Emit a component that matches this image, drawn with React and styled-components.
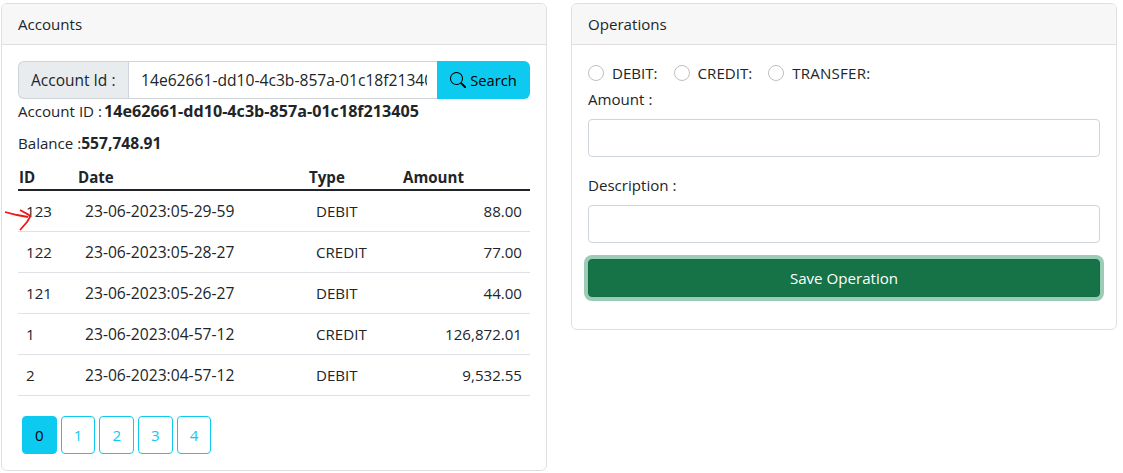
import { BsSearch } from 'react-icons/bs'
import styled, { createGlobalStyle } from 'styled-components'

const rows = [
  { id: 123, date: '23-06-2023:05-29-59', type: 'DEBIT', amount: '88.00' },
  { id: 122, date: '23-06-2023:05-28-27', type: 'CREDIT', amount: '77.00' },
  { id: 121, date: '23-06-2023:05-26-27', type: 'DEBIT', amount: '44.00' },
  { id: 1, date: '23-06-2023:04-57-12', type: 'CREDIT', amount: '126,872.01' },
  { id: 2, date: '23-06-2023:04-57-12', type: 'DEBIT', amount: '9,532.55' }
]

export default function App () {
  return (
    <>
      <GlobalStyle />
      <Page>
        <Card>
          <CardHeader>Accounts</CardHeader>
          <CardBody>
            <InputGroup>
              <Addon>Account Id :</Addon>
              <GroupInput type="text" readOnly value="14e62661-dd10-4c3b-857a-01c18f213405" />
              <SearchBtn type="button">
                <BsSearch size={16} />
                Search
              </SearchBtn>
            </InputGroup>
            <InfoLine>Account ID :<InfoValue $size="16.15px" $gap="2px">14e62661-dd10-4c3b-857a-01c18f213405</InfoValue></InfoLine>
            <InfoLine>Balance :<InfoValue $size="15.6px">557,748.91</InfoValue></InfoLine>
            <TableWrap>
              <Table>
                <colgroup>
                  <col width="59" />
                  <col width="231" />
                  <col width="94" />
                  <col width="128" />
                </colgroup>
                <thead>
                  <tr>
                    <th>ID</th>
                    <th>Date</th>
                    <th>Type</th>
                    <th>Amount</th>
                  </tr>
                </thead>
                <tbody>
                  {rows.map(row => (
                    <tr key={row.id}>
                      <td>{row.id}</td>
                      <DateCell>{row.date}</DateCell>
                      <td>{row.type}</td>
                      <AmountCell>{row.amount}</AmountCell>
                    </tr>
                  ))}
                </tbody>
              </Table>
              <Scribble viewBox="0 0 40 40" width="40" height="40">
                <path d="M5 21 L17 24 L28 26" />
                <path d="M20 19 L29 24 L30 26 L27 31 L20 39" />
              </Scribble>
            </TableWrap>
            <Pagination>
              {[0, 1, 2, 3, 4].map(page => (
                <PageBtn key={page} type="button" $active={page === 0}>{page}</PageBtn>
              ))}
            </Pagination>
          </CardBody>
        </Card>
        <Card>
          <CardHeader>Operations</CardHeader>
          <CardBody>
            <RadioRow>
              <RadioLabel><Radio type="radio" name="op" />DEBIT:</RadioLabel>
              <RadioLabel><Radio type="radio" name="op" />CREDIT:</RadioLabel>
              <RadioLabel $spacing="0.2px"><Radio type="radio" name="op" />TRANSFER:</RadioLabel>
            </RadioRow>
            <Field>
              <FieldLabel>Amount :</FieldLabel>
              <FieldInput type="text" />
            </Field>
            <Field>
              <FieldLabel>Description :</FieldLabel>
              <FieldInput type="text" />
            </Field>
            <SaveBtn type="button">Save Operation</SaveBtn>
          </CardBody>
        </Card>
      </Page>
    </>
  )
}

const GlobalStyle = createGlobalStyle`
  * {
    box-sizing: border-box;
  }
  body {
    margin: 0;
    background: #ffffff;
    color: #212529;
    font-family: "Open Sans", "Noto Sans", sans-serif;
    font-size: 15.1px;
    line-height: 24px;
  }
`
const Page = styled.div`
  display: grid;
  grid-template-columns: 546px 546px;
  grid-gap: 24px;
  align-items: start;
  padding: 3px 0 0 1px;
`
const Card = styled.section`
  border: 1px solid #dfdfdf;
  border-radius: 6px;
  background: #ffffff;
  overflow: hidden;
`
const CardHeader = styled.header`
  height: 41px;
  padding: 8px 16px;
  background: #f7f7f7;
  border-bottom: 1px solid #dfdfdf;
`
const CardBody = styled.div`
  padding: 16px;
`
const InputGroup = styled.div`
  display: flex;
  height: 38px;
`
const Addon = styled.span`
  display: flex;
  align-items: center;
  width: 110px;
  padding: 0 12px;
  background: #e9ecef;
  border: 1px solid #ced4da;
  border-right: none;
  border-radius: 6px 0 0 6px;
  font-size: 15.5px;
  white-space: nowrap;
`
const GroupInput = styled.input`
  flex: 1;
  min-width: 0;
  padding: 0 10px 0 12px;
  border: 1px solid #ced4da;
  border-right: none;
  outline: none;
  color: #212529;
  font: inherit;
  font-size: 15.65px;
`
const SearchBtn = styled.button`
  display: flex;
  align-items: center;
  justify-content: center;
  gap: 4px;
  width: 93px;
  padding: 0;
  background: #0dcaf0;
  border: none;
  border-radius: 0 6px 6px 0;
  color: #000000;
  font: inherit;
  font-size: 14.7px;
`
const InfoLine = styled.p`
  margin: 0 0 8px;
`
const InfoValue = styled.b`
  margin-left: ${props => props.$gap || 0};
  font-weight: 700;
  font-size: ${props => props.$size};
`
const TableWrap = styled.div`
  position: relative;
  margin-top: 10px;
`
const Table = styled.table`
  width: 512px;
  table-layout: fixed;
  border-collapse: collapse;
  th {
    height: 25px;
    padding: 0 0 0 1px;
    text-align: left;
    font-weight: 700;
    border-bottom: 2px solid #212529;
  }
  td {
    height: 41px;
    padding: 0 8px;
    border-bottom: 1px solid #dee2e6;
  }
`
const DateCell = styled.td`
  font-size: 15.65px;
`
const AmountCell = styled.td`
  text-align: right;
`
const Scribble = styled.svg`
  position: absolute;
  top: 26px;
  left: -18px;
  fill: none;
  stroke: #f01414;
  stroke-width: 1.8;
`
const Pagination = styled.nav`
  display: flex;
  gap: 4px;
  margin: 20px 0 0 4px;
`
const PageBtn = styled.button`
  height: 38px;
  width: 34.7px;
  padding: 0;
  border: 1px solid #0dcaf0;
  border-radius: 4px;
  background: ${props => (props.$active ? '#0dcaf0' : '#ffffff')};
  color: ${props => (props.$active ? '#000000' : '#0dcaf0')};
  font: inherit;
`
const RadioRow = styled.div`
  display: flex;
  gap: 16px;
  height: 24px;
  margin-bottom: 2px;
`
const RadioLabel = styled.label`
  display: flex;
  align-items: center;
  gap: 8px;
  letter-spacing: ${props => props.$spacing || 'normal'};
`
const Radio = styled.input`
  appearance: none;
  width: 16px;
  height: 16px;
  margin: 0;
  border: 1px solid #bfbfbf;
  border-radius: 50%;
  background: #ffffff;
`
const Field = styled.div`
  margin-bottom: 16px;
`
const FieldLabel = styled.label`
  display: block;
  margin-bottom: 8px;
`
const FieldInput = styled.input`
  display: block;
  width: 100%;
  height: 38px;
  border: 1px solid #ced4da;
  border-radius: 4px;
  outline: none;
`
const SaveBtn = styled.button`
  display: block;
  width: 100%;
  height: 38px;
  margin-bottom: 16px;
  border: 1px solid #146c43;
  border-radius: 4px;
  background: #157347;
  box-shadow: 0 0 0 4px rgba(60, 153, 110, 0.5);
  color: #ffffff;
  font: inherit;
`
